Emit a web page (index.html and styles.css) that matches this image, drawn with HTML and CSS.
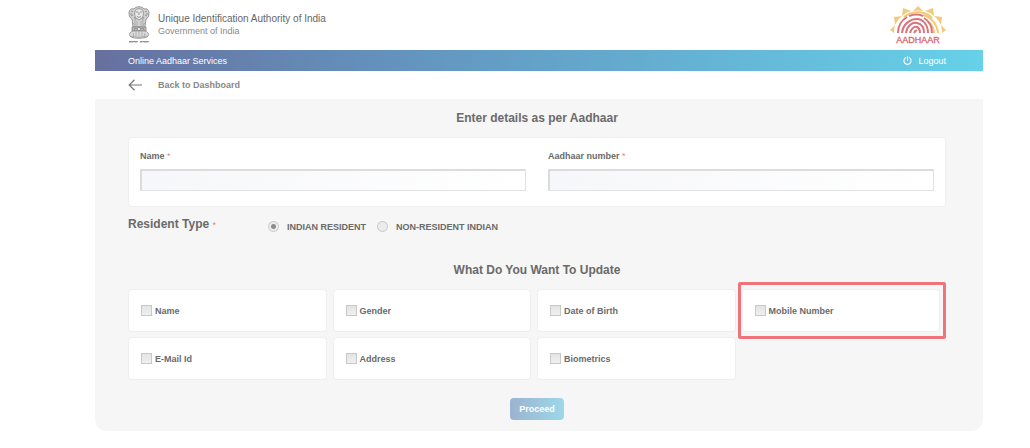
FILE: index.html
```html
<!DOCTYPE html>
<html lang="en">
<head>
    <meta charset="UTF-8">
    <meta name="viewport" content="width=device-width, initial-scale=1.0">
    <title>Online Aadhaar Services</title>
    <link rel="stylesheet" href="styles.css">
</head>
<body>
    <div class="page">
        <header class="header">
            <!-- State emblem -->
            <svg class="emblem" viewBox="0 0 22 38" width="22" height="38" fill="none" stroke="#858585" stroke-width="0.8" aria-hidden="true">
                <path fill="#d2d2d2" d="M6 3C3 2 1 4 1 7s1 5 3 6l1 8h12l1-8c2-1 3-3 3-6s-2-5-5-4c-2-3-8-3-10 0z"/>
                <path fill="#e8e8e8" d="M7 5c1-3 7-3 8 0 1 3 0 6-1 7l-3 2-3-2C7 11 6 8 7 5z"/>
                <path d="M8 6h2M12 6h2M11 6v3M9 10.500q2 1.500 4 0M3 5l2 1M2 8h2M3 10l2-1M19 5l-2 1M20 8h-2M19 10l-2-1M6 11l2 3M16 11l-2 3"/>
                <path stroke="#a5a5a5" d="M7 13v8M9 15v6M13 15v6M15 13v8M5 17l2 2M17 17l-2 2"/>
                <path fill="#bbb" d="M4 21h14v4H4z"/>
                <circle cx="11" cy="23" r="1.600" fill="#eee"/>
                <path d="M6 24l1-2 2 1M16 24l-1-2-2 1"/>
                <path fill="#ddd" d="M5 25c-3 1-4 3-3 5 1 3 17 3 18 0 1-2 0-4-3-5z"/>
                <path stroke="#a5a5a5" d="M5 27l1 4M8 26v5M11 26v6M14 26v5M17 27l-1 4M3 30q8 3 16 0"/>
                <path d="M1 35.500h9M12 35.500h9M2 35v2M4 35v2M6 35v1.500M8 35v2M13 35v2M15 35v1.500M17 35v2M19 35v2"/>
            </svg>
            <div class="brand">
                <div class="brand-name">Unique Identification Authority of India</div>
                <div class="brand-sub">Government of India</div>
            </div>
            <!-- Aadhaar logo -->
            <svg class="logo" viewBox="0 0 56 38" width="56" height="38" role="img" aria-label="Aadhaar">
                <g fill="#f1cb7a">
                    <path d="M23 5L28 0l5 5q-5-1-10 0z"/>
                    <path d="M12 10l1-8 8 3q-5 1-9 5zM44 10l-1-8-8 3q5 1 9 5z"/>
                    <path d="M5 19l-1-8 8-1q-5 4-7 9zM51 19l1-8-8-1q5 4 7 9z"/>
                    <path d="M4 27l-4-3 5-5q-1 4-1 8zM52 27l4-3-5-5q1 4 1 8z"/>
                </g>
                <g fill="none" stroke-width="2">
                    <path stroke="#f1cb7a" d="M14 11C22 4 36 5 42 12M33 9c8 2 14 9 15 18M39 16c3 3 5 7 5 11"/>
                    <g stroke="#db737b">
                        <path d="M8 27c0-7 4-13 9-16M19 10c5-2 10-2 14 0M34 12c5 3 8 8 8 15"/>
                        <path d="M12 27c1-9 8-14 15-14 6 0 11 6 11 14"/>
                        <path d="M16 27c1-7 6-11 11-10 5 1 7 5 7 10"/>
                        <path d="M20 27c1-4 4-7 7-6 2 1 3 3 3 6M24 27c1-2 2-3 3-2"/>
                    </g>
                </g>
                <text class="logo-text" x="28" y="37" text-anchor="middle">AADHAAR</text>
            </svg>
        </header>

        <nav class="topbar">
            <span>Online Aadhaar Services</span>
            <a href="#" class="logout">
                <svg viewBox="0 0 10 10" width="9" height="9" fill="none" stroke="#fff" stroke-width="1.200" stroke-linecap="round" aria-hidden="true">
                    <path d="M3 1.800a4 4 0 1 0 4 0M5 0.800v4"/>
                </svg>
                Logout
            </a>
        </nav>

        <div class="back-row">
            <a href="#" class="back-link">
                <svg viewBox="0 0 14 12" width="14" height="12" fill="none" stroke="#777" stroke-width="1.200" aria-hidden="true">
                    <path d="M6.500 0.800L1.200 6l5.300 5.200M1.200 6H14"/>
                </svg>
                Back to Dashboard
            </a>
        </div>

        <form class="content">
            <h2>Enter details as per Aadhaar</h2>

            <div class="card details">
                <div class="field">
                    <label for="name">Name <span class="required">*</span></label>
                    <input type="text" id="name" name="name" class="text-input">
                </div>
                <div class="field">
                    <label for="aadhaar">Aadhaar number <span class="required">*</span></label>
                    <input type="text" id="aadhaar" name="aadhaar" class="text-input">
                </div>
            </div>

            <div class="resident" role="radiogroup" aria-labelledby="resident-title">
                <div class="resident-title" id="resident-title">Resident Type <span class="required">*</span></div>
                <label class="radio"><input type="radio" name="resident" checked>INDIAN RESIDENT</label>
                <label class="radio"><input type="radio" name="resident">NON-RESIDENT INDIAN</label>
            </div>

            <h2>What Do You Want To Update</h2>

            <div class="options">
                <label class="card option"><input type="checkbox" name="update">Name</label>
                <label class="card option"><input type="checkbox" name="update">Gender</label>
                <label class="card option"><input type="checkbox" name="update">Date of Birth</label>
                <label class="card option highlight"><input type="checkbox" name="update">Mobile Number</label>
                <label class="card option"><input type="checkbox" name="update">E-Mail Id</label>
                <label class="card option"><input type="checkbox" name="update">Address</label>
                <label class="card option"><input type="checkbox" name="update">Biometrics</label>
            </div>

            <button type="submit" class="proceed">Proceed</button>
        </form>
    </div>
</body>
</html>
```
FILE: styles.css
```css
* {
    box-sizing: border-box;
}

body {
    margin: 0;
    background-color: #fff;
    color: #6a6a6a;
    font-family: "Liberation Sans", Arial, sans-serif;
    font-size: 9px;
    line-height: 12px;
}

a {
    color: inherit;
    text-decoration: none;
}

.page {
    margin: 0 47px 0 95px;
}

.header {
    display: flex;
    align-items: center;
    height: 50px;
    padding: 0 37px 0 33px;
}

.brand {
    margin-left: 8px;
}

.brand-name {
    font-size: 10px;
    color: #666;
}

.brand-sub {
    color: #8a8a8a;
}

.logo {
    margin-left: auto;
}

.logo-text {
    fill: #db656d;
    stroke: #db656d;
    stroke-width: 0.3px;
    font-size: 9px;
}

.topbar {
    display: flex;
    align-items: center;
    justify-content: space-between;
    height: 21px;
    padding: 0 37px 0 33px;
    background: linear-gradient(to right, #67709f, #6392bd 33%, #66d1e9);
    color: #fff;
}

.logout {
    display: flex;
    align-items: center;
    gap: 6px;
}

.back-row {
    height: 28px;
    padding: 8px 33px;
}

.back-link {
    display: inline-flex;
    align-items: center;
    gap: 16px;
    color: #888;
    font-weight: bold;
}

.content {
    display: flex;
    flex-direction: column;
    padding: 12px 37px 11px 33px;
    background-color: #f6f6f6;
    border-radius: 0 0 12px 12px;
}

h2 {
    margin: 0;
    font-size: 12px;
    line-height: 14px;
    text-align: center;
}

.card {
    background-color: #fff;
    border: 1px solid #eee;
    border-radius: 4px;
}

.details {
    display: grid;
    grid-template-columns: 1fr 1fr;
    gap: 22px;
    margin-top: 12px;
    padding: 12px 11px 15px;
}

.field label {
    display: block;
    margin-bottom: 7px;
    font-weight: bold;
}

.required {
    color: #e58585;
    font-size: 9px;
    font-weight: normal;
}

.text-input {
    display: block;
    width: 100%;
    height: 22px;
    padding: 0 6px;
    border: 1px solid #e2e2e2;
    border-top: 2px solid #dcdcdc;
    border-left: 2px solid #dcdcdc;
    background: linear-gradient(to right, #f6f7fa, #fff);
    color: #666;
    font: inherit;
}

.resident {
    display: flex;
    align-items: center;
    gap: 11px;
    margin: 9px 0 30px;
    font-weight: bold;
}

.resident-title {
    width: 129px;
    font-size: 12px;
    line-height: 16px;
}

.radio {
    display: flex;
    align-items: center;
    gap: 8px;
    padding-top: 4px;
}

.radio input {
    appearance: none;
    width: 11px;
    height: 11px;
    margin: 0;
    border: 1px solid #c8c8c8;
    border-radius: 50%;
    background-color: #ececec;
}

.radio input:checked {
    background: radial-gradient(circle, #8c8c8c 2px, #ececec 3px);
}

.options {
    display: grid;
    grid-template-columns: repeat(4, 1fr);
    gap: 5px 6px;
    margin-top: 12px;
    padding-right: 6px;
}

.option {
    position: relative;
    display: flex;
    align-items: center;
    gap: 3px;
    height: 43px;
    padding-left: 12px;
    font-weight: bold;
}

.option input {
    appearance: none;
    width: 11px;
    height: 11px;
    margin: 0;
    border: 1px solid #c8c8c8;
    background: linear-gradient(#e4e4e4, #f0f0f0);
}

/* red frame drawn around the tile */
.highlight::after {
    content: "";
    position: absolute;
    inset: -8px -7px -8px -5px;
    border: 3px solid #ee7479;
    border-radius: 2px;
}

.proceed {
    align-self: center;
    width: 54px;
    height: 22px;
    margin-top: 18px;
    padding: 0;
    border: 0;
    border-radius: 4px;
    background: linear-gradient(to right, #9db3d0, #9cd8ea);
    color: #fff;
    font: inherit;
    font-weight: bold;
}
```
